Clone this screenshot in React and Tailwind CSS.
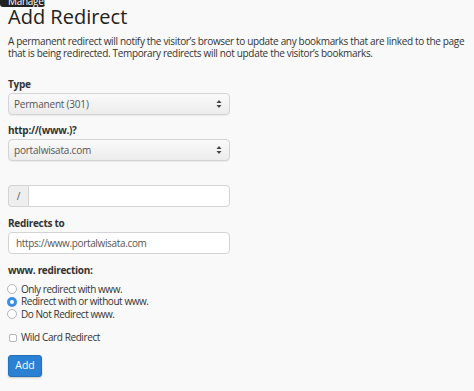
import { useState } from "react";

function SelectArrows() {
  return (
    <svg width="6" height="10" viewBox="0 0 6 10" className="absolute right-[7px] top-1/2 -translate-y-1/2">
      <path d="M0.5 4 L3 1 L5.5 4 Z" fill="#444" />
      <path d="M0.5 6 L3 9 L5.5 6 Z" fill="#444" />
    </svg>
  );
}

function FakeSelect({ value }) {
  return (
    <div className="relative w-[222px] h-[22px] rounded-[4px] border border-[#d4d4d4] bg-gradient-to-b from-[#fafafa] to-[#ececec] shadow-[0_1px_1px_rgba(0,0,0,0.06)] flex items-center pl-[5px] text-[10px] tracking-[-0.2px] text-[#555]">
      {value}
      <SelectArrows />
    </div>
  );
}

function Radio({ checked, label, onClick }) {
  return (
    <label className="flex items-center gap-[4px] h-[12.5px] cursor-pointer -ml-[1px]" onClick={onClick}>
      {checked ? (
        <span className="w-[10px] h-[10px] rounded-full bg-[#3a8ee6] flex items-center justify-center">
          <span className="w-[4px] h-[4px] rounded-full bg-white" />
        </span>
      ) : (
        <span className="w-[10px] h-[10px] rounded-full border border-[#b5b5b5] bg-white" />
      )}
      <span>{label}</span>
    </label>
  );
}

export default function App() {
  const [mode, setMode] = useState(1);
  const [wild, setWild] = useState(false);

  const options = [
    "Only redirect with www.",
    "Redirect with or without www.",
    "Do Not Redirect www.",
  ];

  return (
    <div className="relative w-[474px] h-[391px] bg-[#f9f9f9] overflow-hidden font-['Open_Sans','DejaVu_Sans',sans-serif] text-[#333]">
      <div className="absolute left-0 top-[-5px] h-[12px] w-[45px] bg-[#222] rounded-b-[3px] text-white text-[10px] tracking-[-0.3px] leading-[12px] pl-[8px]">
        Manager
      </div>

      <div className="pl-[8px] pr-[8px] pt-[7px]">
        <h1 className="text-[20px] leading-[20px] text-[#222]">Add Redirect</h1>

        <p className="mt-[8px] text-[10px] leading-[12px] tracking-[-0.33px] text-[#333] w-[462px]">
          A permanent redirect will notify the visitor’s browser to update any bookmarks that are linked to the page
          that is being redirected. Temporary redirects will not update the visitor’s bookmarks.
        </p>

        <div className="mt-[19px] text-[10px] font-bold leading-[12px] tracking-[-0.3px]">Type</div>
        <div className="mt-[3px]">
          <FakeSelect value="Permanent (301)" />
        </div>

        <div className="mt-[9px] text-[10px] font-bold leading-[12px] tracking-[-0.3px]">http://(www.)?</div>
        <div className="mt-[3px]">
          <FakeSelect value="portalwisata.com" />
        </div>

        <div className="mt-[24px] flex w-[222px] h-[22px]">
          <div className="w-[20px] border border-[#d4d4d4] border-r-0 rounded-l-[4px] bg-[#eee] flex items-center justify-center text-[10px] text-[#555]">
            /
          </div>
          <input className="flex-1 min-w-0 border border-[#d4d4d4] rounded-r-[4px] bg-white outline-none px-[6px] text-[10px]" />
        </div>

        <div className="mt-[10px] text-[10px] font-bold leading-[12px] tracking-[-0.3px]">Redirects to</div>
        <input
          defaultValue="https://www.portalwisata.com"
          className="mt-[3px] block w-[222px] h-[22px] border border-[#d4d4d4] rounded-[4px] bg-white outline-none px-[7px] text-[10px] tracking-[-0.35px] text-[#555]"
        />

        <div className="mt-[10px] text-[10px] font-bold leading-[12px] tracking-[-0.3px]">www. redirection:</div>
        <div className="mt-[7px] flex flex-col text-[10px] tracking-[-0.45px] text-[#333]">
          {options.map((o, i) => (
            <Radio key={o} label={o} checked={mode === i} onClick={() => setMode(i)} />
          ))}
        </div>

        <label
          className="mt-[11px] h-[12px] flex items-center gap-[4px] text-[10px] tracking-[-0.4px] pl-[1px] cursor-pointer"
          onClick={() => setWild(!wild)}
        >
          <span className="w-[8px] h-[8px] border border-[#b5b5b5] rounded-[2px] bg-white" />
          <span>Wild Card Redirect</span>
        </label>

        <button className="mt-[11px] block w-[34px] h-[22px] rounded-[3px] bg-[#2a80d2] border border-[#2670b8] text-white text-[10.5px] shadow-[0_1px_2px_rgba(0,0,0,0.2)]">
          Add
        </button>
      </div>
    </div>
  );
}
